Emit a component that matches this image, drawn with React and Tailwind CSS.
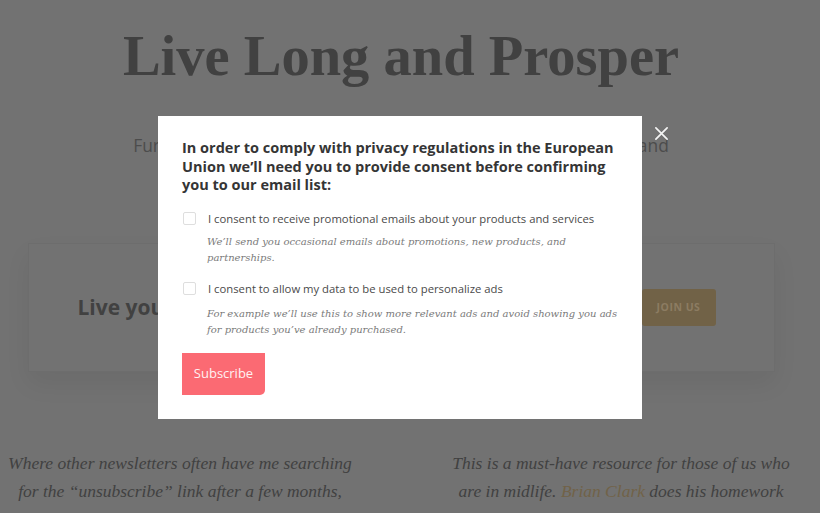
import React from "react";

export default function App() {
  return (
    <div className="relative w-[820px] h-[513px] overflow-hidden bg-[#727272]">
      {/* underlying page (already dimmed colours) */}
      <div className="w-[802px] flex flex-col items-center">
        <h1
          className="mt-[24px] text-[56.5px] leading-[64px] font-bold text-[#414141]"
          style={{ fontFamily: '"Liberation Serif", serif' }}
        >
          Live Long and Prosper
        </h1>
        <p
          className="mt-[44px] whitespace-nowrap text-[17.4px] leading-[26px] text-[#4c4c4c]"
          style={{ fontFamily: '"Open Sans", sans-serif' }}
        >
          Further reading for people in midlife who want to thrive, grow and
        </p>

        <div className="mt-[85px] w-[747px] h-[129px] border border-[#6d6d6d] shadow-[0_12px_24px_rgba(0,0,0,0.06)] flex items-center justify-between pl-[49px] pr-[58px]">
          <span
            className="text-[21px] font-bold text-[#414141]"
            style={{ fontFamily: '"Open Sans", sans-serif' }}
          >
            Live your best life
          </span>
          <div
            className="w-[74px] h-[37px] rounded-[3px] bg-[#716247] flex items-center justify-center text-[10.5px] font-bold tracking-[0.5px] text-[#8c7c62]"
            style={{ fontFamily: '"Open Sans", sans-serif' }}
          >
            JOIN US
          </div>
        </div>

        <div
          className="mt-[77px] w-[802px] grid grid-cols-[360px_360px] gap-x-[81px] text-[17.5px] leading-[28px] italic text-[#414141] text-center"
          style={{ fontFamily: '"Liberation Serif", serif' }}
        >
          <p>
            Where other newsletters often have me searching
            <br />
            for the “unsubscribe” link after a few months,
          </p>
          <p>
            This is a must-have resource for those of us who
            <br />
            are in midlife. <span className="text-[#716248]">Brian Clark</span> does his homework
          </p>
        </div>
      </div>

      {/* modal */}
      <div className="absolute left-[158px] top-[116px] w-[484px] h-[303px] bg-white px-[24px] pt-[23px]">
        <h2
          className="text-[14.5px] leading-[18.5px] font-bold text-[#353535]"
          style={{ fontFamily: '"Open Sans", sans-serif' }}
        >
          In order to comply with privacy regulations in the European
          <br />
          Union we’ll need you to provide consent before confirming
          <br />
          you to our email list:
        </h2>

        <div className="mt-[15px] flex flex-col gap-[14px]">
          <div>
            <label className="flex items-center gap-[12px]">
              <span className="shrink-0 w-[13px] h-[13px] ml-[1px] border border-[#dedede] rounded-[2px] bg-white" />
              <span
                className="whitespace-nowrap text-[11.3px] leading-[18px] text-[#4a4a4a]"
                style={{ fontFamily: '"Open Sans", sans-serif' }}
              >
                I consent to receive promotional emails about your products and services
              </span>
            </label>
            <p
              className="mt-[6px] ml-[25px] whitespace-nowrap text-[10px] leading-[16px] italic text-[#7a7a7a]"
              style={{ fontFamily: '"DejaVu Serif", serif' }}
            >
              We’ll send you occasional emails about promotions, new products, and
              <br />
              partnerships.
            </p>
          </div>
          <div>
            <label className="flex items-center gap-[12px]">
              <span className="shrink-0 w-[13px] h-[13px] ml-[1px] border border-[#dedede] rounded-[2px] bg-white" />
              <span
                className="whitespace-nowrap text-[11.3px] leading-[18px] text-[#4a4a4a]"
                style={{ fontFamily: '"Open Sans", sans-serif' }}
              >
                I consent to allow my data to be used to personalize ads
              </span>
            </label>
            <p
              className="mt-[8px] ml-[25px] whitespace-nowrap text-[10px] leading-[16px] italic text-[#7a7a7a]"
              style={{ fontFamily: '"DejaVu Serif", serif' }}
            >
              For example we’ll use this to show more relevant ads and avoid showing you ads
              <br />
              for products you’ve already purchased.
            </p>
          </div>
        </div>

        <button
          className="mt-[15px] w-[83px] h-[42px] bg-[#fb6a73] rounded-br-[5px] text-[13px] text-[#fff1f2]"
          style={{ fontFamily: '"Open Sans", sans-serif' }}
        >
          Subscribe
        </button>
      </div>

      {/* close */}
      <button className="absolute left-[654px] top-[126px] w-[15px] h-[15px]">
        <svg viewBox="0 0 16 16" width="15" height="15">
          <path d="M2 2L14 14M14 2L2 14" stroke="#f4f4f4" strokeWidth="1.8" strokeLinecap="round" />
        </svg>
      </button>
    </div>
  );
}
